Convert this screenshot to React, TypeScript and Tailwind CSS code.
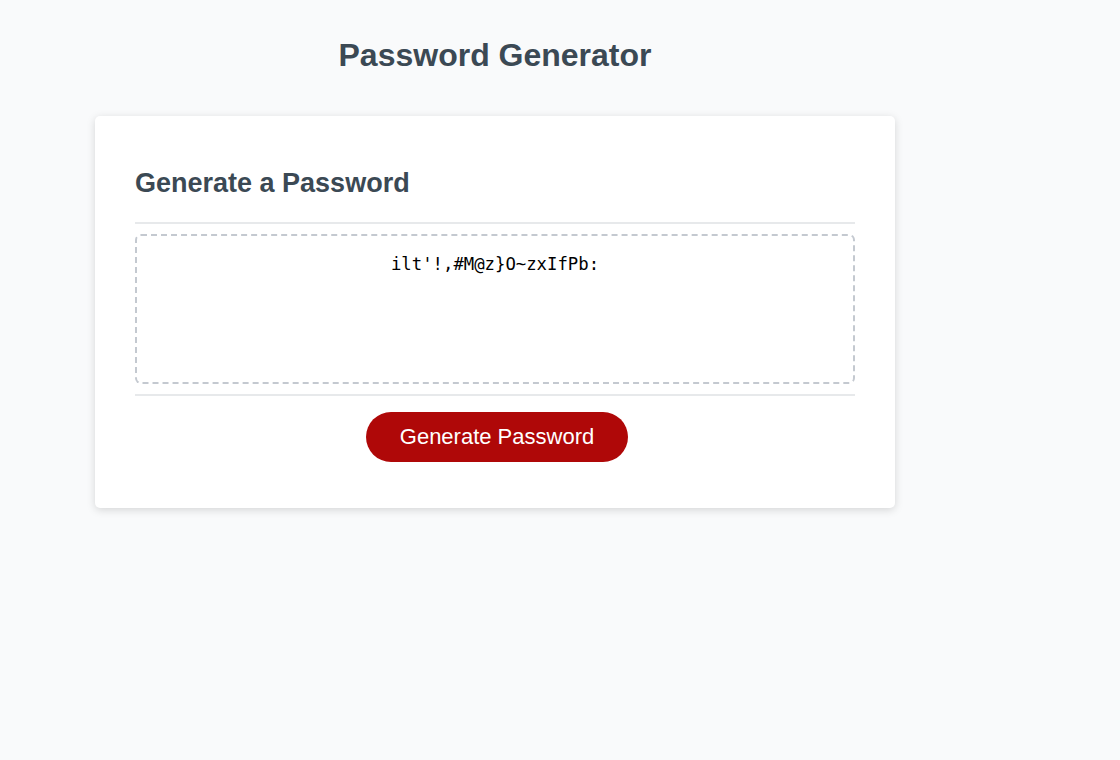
const PASSWORD = "ilt'!,#M@z}O~zxIfPb:";

export default function App() {
  return (
    <div className="min-h-screen bg-[#f9fafb] font-['Liberation_Sans',Arial,sans-serif] text-[#3b4954]">
      <div className="w-[990px] flex flex-col">
        <h1 className="mt-[37px] text-center text-[32px] leading-[37px] font-bold">Password Generator</h1>
        <div className="mt-[42px] mx-auto w-[800px] rounded-[5px] bg-white shadow-[0_2px_8px_0_rgba(0,0,0,0.15)] px-[40px] pt-[30px] pb-[30px]">
          <h2 className="mt-[22px] text-[27px] leading-[31px] font-bold">Generate a Password</h2>
          <div className="mt-[23px] h-[2px] bg-[#e7e9eb]" />
          <div className="mt-[10px] h-[150px] rounded-[6px] border-2 border-dashed border-[#c4c9d0] pt-[16px] text-center font-['DejaVu_Sans_Mono',monospace] text-[17.3px] text-black">
            {PASSWORD}
          </div>
          <div className="mt-[10px] h-[2px] bg-[#e7e9eb]" />
          <div className="flex justify-center">
            <button className="mt-[16px] mb-[16px] ml-[20px] mr-[16px] rounded-[25px] bg-[#af0808] px-[34px] py-[14px] text-[22px] leading-[22px] text-white">
              Generate Password
            </button>
          </div>
        </div>
      </div>
    </div>
  );
}
